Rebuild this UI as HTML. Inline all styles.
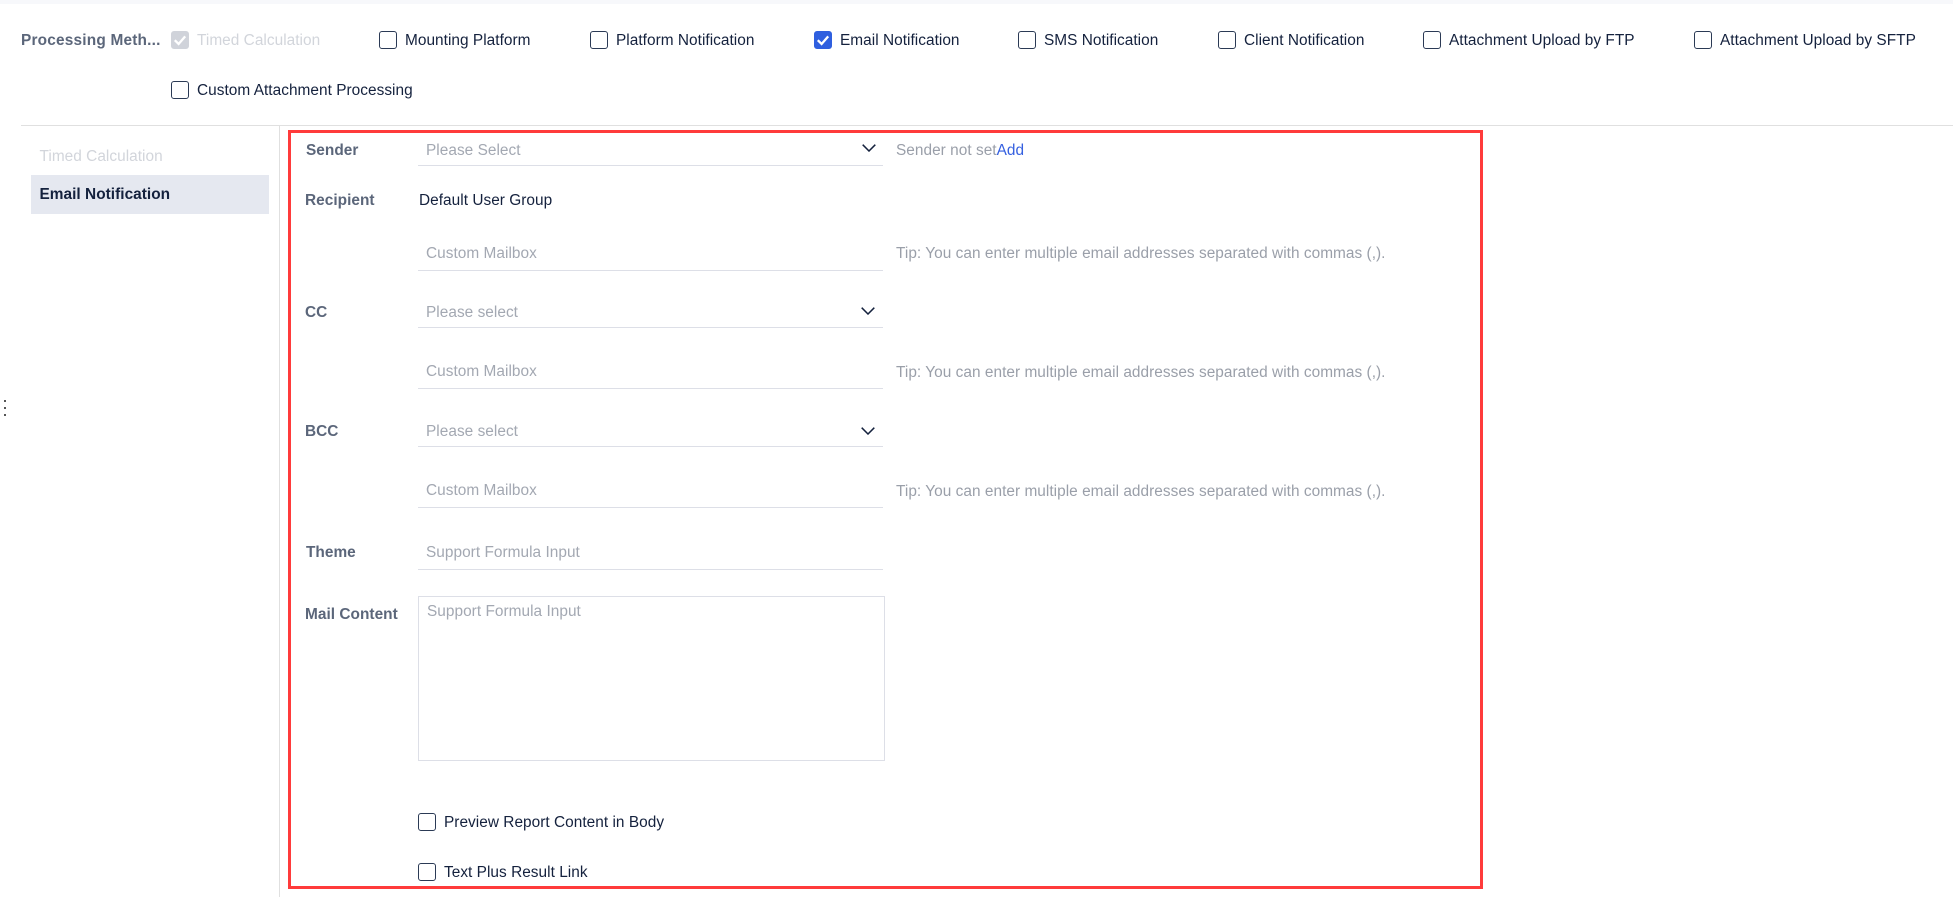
<!DOCTYPE html>
<html lang="en">
<head>
<meta charset="utf-8">
<title>Processing Method</title>
<style>
html,body{margin:0;padding:0;background:#fff;}
body{position:relative;width:1953px;height:897px;overflow:hidden;font-family:"Liberation Sans",Arial,sans-serif;font-size:15.4px;letter-spacing:.035px;color:#14213d;}
.t{position:absolute;line-height:20px;height:20px;white-space:nowrap;}
.l{font-weight:700;color:#5b667a;}
.p{color:#a3a8b2;}
.tip{color:#9a9fa9;}
.dis{color:#d2d5db;}
.box{position:absolute;width:18px;height:18px;box-sizing:border-box;border:1.3px solid #2b3a55;border-radius:3px;background:#fff;}
.box svg{position:absolute;left:-1.3px;top:-1.3px;width:18px;height:18px;}
.box.on{background:#2f5fdf;border-color:#2f5fdf;}
.box.off{background:#d0d3da;border-color:#d0d3da;}
.u{position:absolute;left:418px;width:465px;height:1.4px;background:#dddfe7;}
.r{position:absolute;background:#ff3b3b;}
.chev{position:absolute;width:14px;height:8px;}
</style>
</head>
<body>
<div style="position:absolute;left:0;top:0;width:1953px;height:4px;background:#f7f8fb"></div>

<div class="t l" style="left:21px;top:31px;letter-spacing:.2px">Processing Meth...</div>

<div class="box off" style="left:171px;top:31px"><svg viewBox="0 0 18 18"><path d="M3.8 9.2l3.8 3.8L14.2 5.4" fill="none" stroke="#fff" stroke-width="2.3"/></svg></div>
<div class="t dis" style="left:197px;top:31px">Timed Calculation</div>

<div class="box" style="left:379px;top:31px"></div>
<div class="t" style="left:405px;top:31px">Mounting Platform</div>

<div class="box" style="left:590px;top:31px"></div>
<div class="t" style="left:616px;top:31px">Platform Notification</div>

<div class="box on" style="left:814px;top:31px"><svg viewBox="0 0 18 18"><path d="M3.8 9.2l3.8 3.8L14.2 5.4" fill="none" stroke="#fff" stroke-width="2.3"/></svg></div>
<div class="t" style="left:840px;top:31px">Email Notification</div>

<div class="box" style="left:1018px;top:31px"></div>
<div class="t" style="left:1044px;top:31px">SMS Notification</div>

<div class="box" style="left:1218px;top:31px"></div>
<div class="t" style="left:1244px;top:31px">Client Notification</div>

<div class="box" style="left:1423px;top:31px"></div>
<div class="t" style="left:1449px;top:31px">Attachment Upload by FTP</div>

<div class="box" style="left:1694px;top:31px"></div>
<div class="t" style="left:1720px;top:31px">Attachment Upload by SFTP</div>

<div class="box" style="left:171px;top:81px"></div>
<div class="t" style="left:197px;top:81px">Custom Attachment Processing</div>

<div style="position:absolute;left:21px;top:125px;width:1932px;height:1px;background:#e0e0e0"></div>
<div style="position:absolute;left:279px;top:126px;width:1px;height:771px;background:#e0e0e0"></div>

<div class="t dis" style="left:39.5px;top:147px">Timed Calculation</div>
<div style="position:absolute;left:31px;top:175px;width:238px;height:39px;background:#e5e8f0"></div>
<div class="t" style="left:39.5px;top:185px;font-weight:700">Email Notification</div>

<div style="position:absolute;left:4px;top:400px;width:2px;height:2px;background:#555"></div>
<div style="position:absolute;left:4px;top:407px;width:2px;height:2px;background:#555"></div>
<div style="position:absolute;left:4px;top:414px;width:2px;height:2px;background:#555"></div>

<div class="t l" style="left:306px;top:141px">Sender</div>
<div class="t p" style="left:426px;top:141px">Please Select</div>
<svg class="chev" style="left:862px;top:143.5px" viewBox="0 0 14 8"><path d="M.7.7L7 7l6.3-6.3" fill="none" stroke="#14213d" stroke-width="1.5"/></svg>
<div class="u" style="top:165px"></div>
<div class="t tip" style="left:896px;top:141px">Sender not set<span style="color:#3560e0">Add</span></div>

<div class="t l" style="left:305px;top:191px">Recipient</div>
<div class="t" style="left:419px;top:191px">Default User Group</div>

<div class="t p" style="left:426px;top:244px">Custom Mailbox</div>
<div class="u" style="top:270px"></div>
<div class="t tip" style="left:896px;top:244px">Tip: You can enter multiple email addresses separated with commas (,).</div>

<div class="t l" style="left:305px;top:303px">CC</div>
<div class="t p" style="left:426px;top:303px">Please select</div>
<svg class="chev" style="left:861px;top:307px" viewBox="0 0 14 8"><path d="M.7.7L7 7l6.3-6.3" fill="none" stroke="#14213d" stroke-width="1.5"/></svg>
<div class="u" style="top:327px"></div>

<div class="t p" style="left:426px;top:362px">Custom Mailbox</div>
<div class="u" style="top:388px"></div>
<div class="t tip" style="left:896px;top:363px">Tip: You can enter multiple email addresses separated with commas (,).</div>

<div class="t l" style="left:305px;top:422px">BCC</div>
<div class="t p" style="left:426px;top:422px">Please select</div>
<svg class="chev" style="left:861px;top:426.5px" viewBox="0 0 14 8"><path d="M.7.7L7 7l6.3-6.3" fill="none" stroke="#14213d" stroke-width="1.5"/></svg>
<div class="u" style="top:446px"></div>

<div class="t p" style="left:426px;top:481px">Custom Mailbox</div>
<div class="u" style="top:507px"></div>
<div class="t tip" style="left:896px;top:482px">Tip: You can enter multiple email addresses separated with commas (,).</div>

<div class="t l" style="left:306px;top:543px">Theme</div>
<div class="t p" style="left:426px;top:543px">Support Formula Input</div>
<div class="u" style="top:569px"></div>

<div class="t l" style="left:305px;top:605px">Mail Content</div>
<div style="position:absolute;left:418px;top:596px;width:467px;height:165px;box-sizing:border-box;border:1.4px solid #dddfe7"></div>
<div class="t p" style="left:427px;top:602px">Support Formula Input</div>

<div class="box" style="left:418px;top:813px"></div>
<div class="t" style="left:444px;top:813px">Preview Report Content in Body</div>
<div class="box" style="left:418px;top:863px"></div>
<div class="t" style="left:444px;top:863px">Text Plus Result Link</div>

<div class="r" style="left:288px;top:130px;width:1195px;height:3px"></div>
<div class="r" style="left:288px;top:886px;width:1195px;height:3px"></div>
<div class="r" style="left:288px;top:130px;width:3px;height:759px"></div>
<div class="r" style="left:1480px;top:130px;width:3px;height:759px"></div>
</body>
</html>
